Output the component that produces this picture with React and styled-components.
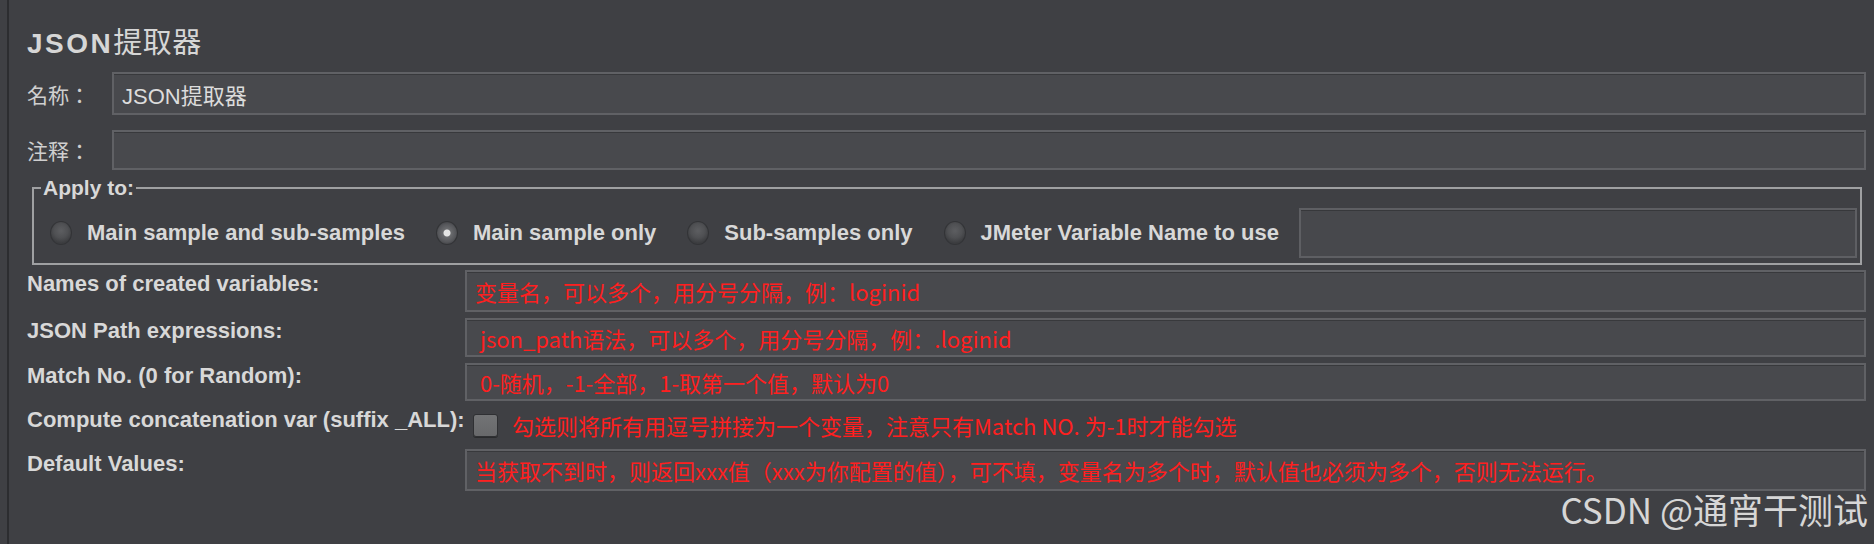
import React from "react";
import styled, { createGlobalStyle } from "styled-components";

const GlobalStyle = createGlobalStyle`
  html, body {
    margin: 0;
    padding: 0;
    background: #3f4044;
  }
  body {
    width: 1874px;
    height: 544px;
    overflow: hidden;
    font-family: "Liberation Sans", "Noto Sans CJK SC", sans-serif;
  }
`;

const Page = styled.div`
  position: relative;
  height: 544px;
  box-sizing: border-box;
  margin-left: 7px;
  border-left: 2px solid #2c2d30;
  padding: 0 8px 0 18px;
  background: #3f4044;
`;

const Title = styled.h1`
  margin: 0;
  height: 72px;
  box-sizing: border-box;
  padding-top: 26px;
  font-size: 28px;
  line-height: 28px;
  font-weight: bold;
  letter-spacing: 2.5px;
  color: #d6d6d6;

  span {
    font-family: "Noto Sans CJK SC", sans-serif;
    font-size: 29px;
    font-weight: normal;
    letter-spacing: 0.5px;
  }
`;

const FormRow = styled.div`
  display: flex;
  align-items: center;
  height: ${(p) => p.$h}px;
  margin-top: ${(p) => p.$mt || 0}px;
`;

const RowLabel = styled.span`
  width: 85px;
  flex-shrink: 0;
  font-family: "Noto Sans CJK JP", "Noto Sans CJK SC", sans-serif;
  font-size: 21px;
  color: #cfcfcf;
`;

const TextBox = styled.div`
  flex: 1;
  align-self: stretch;
  display: flex;
  align-items: center;
  box-sizing: border-box;
  background: #48494d;
  border: 2px solid #606165;
  box-shadow: inset 0 1px 0 #38393c;
  padding-left: 8px;
  font-size: 22px;
  color: #dcdcdc;
  white-space: pre;
`;

const Panel = styled.fieldset`
  margin: 6px 4px 0 5px;
  padding: 8px 3px 5px 16px;
  border: 2px solid #9fa0a2;
  min-width: 0;
`;

const Legend = styled.legend`
  margin-left: -9px;
  padding: 0 2px;
  font-size: 21px;
  line-height: 24px;
  font-weight: bold;
  color: #d8d8d8;
`;

const RadioRow = styled.div`
  display: flex;
  align-items: center;
  height: 50px;
`;

const RadioGroup = styled.div`
  display: flex;
  align-items: center;
  gap: 31px;
`;

const RadioOption = styled.label`
  display: flex;
  align-items: center;
  gap: 15px;
  font-size: 22px;
  font-weight: bold;
  color: #d8d8d8;
  white-space: nowrap;
`;

const RadioDot = styled.span`
  width: 22px;
  height: 24px;
  border-radius: 50%;
  box-sizing: border-box;
  border: 1px solid #333437;
  background: ${(p) =>
    p.$checked
      ? "radial-gradient(circle, #e4e4e4 0 3px, #6a6b6e 4px, #55565a 9px, #3f4043 12px)"
      : "radial-gradient(circle at 50% 40%, #5d5e61 0, #4f5053 7px, #3c3d40 12px)"};
`;

const VarInput = styled.div`
  flex: 1;
  height: 50px;
  margin-left: 20px;
  box-sizing: border-box;
  background: #47484c;
  border: 2px solid #5e5f63;
  box-shadow: inset 0 1px 0 #37383b;
`;

const FieldGrid = styled.div`
  display: grid;
  grid-template-columns: 438px 1fr;
  grid-template-rows: 42px 39px 38px 36px 42px;
  row-gap: 6px;
  margin-top: 5px;
`;

const FieldLabel = styled.div`
  padding-top: ${(p) => p.$pt || 0}px;
  font-size: 22px;
  line-height: 26px;
  font-weight: bold;
  color: #d8d8d8;
  white-space: nowrap;
`;

const HintBox = styled(TextBox)`
  font-family: "Noto Sans CJK SC", sans-serif;
  color: #ff1f1f;
`;

const CheckCell = styled.div`
  display: flex;
  align-items: center;
  padding-left: 8px;
  font-family: "Noto Sans CJK SC", sans-serif;
  font-size: 22px;
  color: #ff1f1f;
  white-space: nowrap;
`;

const CheckBox = styled.span`
  width: 25px;
  height: 23px;
  margin-right: 14px;
  box-sizing: border-box;
  border-radius: 3px;
  border: 1px solid #2f3033;
  background: linear-gradient(#727375, #68696b);
  box-shadow: 0 1px 0 #2a2b2d;
`;

const Watermark = styled.div`
  position: absolute;
  right: 6px;
  top: 491px;
  font-family: "Noto Sans CJK SC", sans-serif;
  font-size: 35px;
  line-height: 35px;
  color: #d6d6d6;
  white-space: nowrap;
`;

const radios = [
  { label: "Main sample and sub-samples", checked: false },
  { label: "Main sample only", checked: true },
  { label: "Sub-samples only", checked: false },
  { label: "JMeter Variable Name to use", checked: false },
];

const App = () => {
  return (
    <>
      <GlobalStyle />
      <Page>
        <Title>
          JSON<span>提取器</span>
        </Title>

        <FormRow $h={43}>
          <RowLabel>名称：</RowLabel>
          <TextBox>JSON提取器</TextBox>
        </FormRow>
        <FormRow $h={40} $mt={15}>
          <RowLabel>注释：</RowLabel>
          <TextBox />
        </FormRow>

        <Panel>
          <Legend>Apply to:</Legend>
          <RadioRow>
            <RadioGroup>
              {radios.map((r) => (
                <RadioOption key={r.label}>
                  <RadioDot $checked={r.checked} />
                  {r.label}
                </RadioOption>
              ))}
            </RadioGroup>
            <VarInput />
          </RadioRow>
        </Panel>

        <FieldGrid>
          <FieldLabel $pt={1}>Names of created variables:</FieldLabel>
          <HintBox>变量名，可以多个，用分号分隔，例：loginid</HintBox>

          <FieldLabel>JSON Path expressions:</FieldLabel>
          <HintBox> json_path语法，可以多个，用分号分隔，例：.loginid</HintBox>

          <FieldLabel>Match No. (0 for Random):</FieldLabel>
          <HintBox> 0-随机，-1-全部，1-取第一个值，默认为0</HintBox>

          <FieldLabel>Compute concatenation var (suffix _ALL):</FieldLabel>
          <CheckCell>
            <CheckBox />
            勾选则将所有用逗号拼接为一个变量，注意只有Match NO. 为-1时才能勾选
          </CheckCell>

          <FieldLabel $pt={2}>Default Values:</FieldLabel>
          <HintBox>当获取不到时，则返回xxx值（xxx为你配置的值），可不填，变量名为多个时，默认值也必须为多个，否则无法运行。</HintBox>
        </FieldGrid>

        <Watermark>CSDN @通宵干测试</Watermark>
      </Page>
    </>
  );
};

export default App;
